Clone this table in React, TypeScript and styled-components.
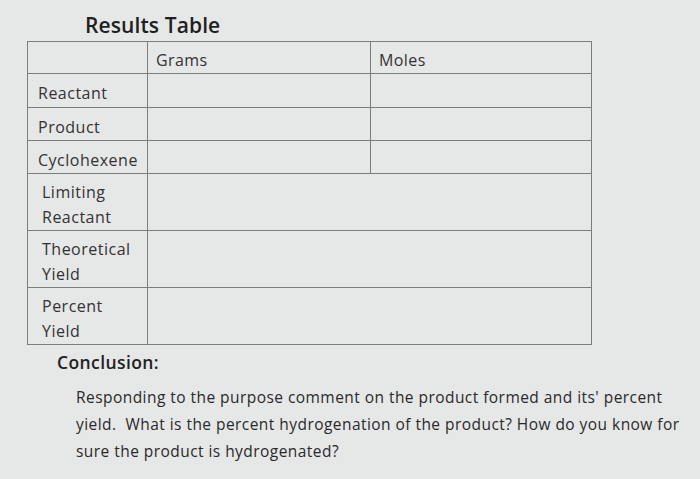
import React from 'react'
import styled, { createGlobalStyle } from 'styled-components'

const GlobalStyle = createGlobalStyle`
  html, body {
    margin: 0;
    padding: 0;
    background: #e6e7e7;
  }
  body {
    font-family: "Open Sans", "DejaVu Sans", sans-serif;
    color: #2b2b2b;
  }
`

interface Row {
  label: string[]
  split: boolean
}

const rows: Row[] = [
  { label: ['Reactant'], split: true },
  { label: ['Product'], split: true },
  { label: ['Cyclohexene'], split: true },
  { label: ['Limiting', 'Reactant'], split: false },
  { label: ['Theoretical', 'Yield'], split: false },
  { label: ['Percent', 'Yield'], split: false },
]

const App = () => {
  return (
    <Page>
      <GlobalStyle />
      <Title>Results Table</Title>
      <Table>
        <colgroup>
          <col style={{ width: 120 }} />
          <col style={{ width: 223 }} />
          <col style={{ width: 221 }} />
        </colgroup>
        <tbody>
          <tr>
            <Cell />
            <HeadCell>Grams</HeadCell>
            <HeadCell>Moles</HeadCell>
          </tr>
          {rows.map((r, idx) => (
            <tr key={r.label.join(' ')}>
              <Label tall={!r.split} first={idx === 0}>
                {r.label.map((l, i) => (
                  <LabelLine key={i}>{l}</LabelLine>
                ))}
              </Label>
              {r.split ? (
                <>
                  <Cell />
                  <Cell />
                </>
              ) : (
                <Cell colSpan={2} />
              )}
            </tr>
          ))}
        </tbody>
      </Table>
      <Conclusion>Conclusion:</Conclusion>
      <Prompt>
        <PromptLine>Responding to the purpose comment on the product formed and its' percent</PromptLine>
        <PromptLine>yield.&nbsp; What is the percent hydrogenation of the product? How do you know for</PromptLine>
        <PromptLine>sure the product is hydrogenated?</PromptLine>
      </Prompt>
    </Page>
  )
}

const Page = styled.div`
  width: 700px;
  height: 479px;
  box-sizing: border-box;
  padding: 12px 0 0 27px;
  overflow: hidden;
`
const Title = styled.h1`
  margin: 0 0 3px 58px;
  font-size: 21px;
  line-height: 26px;
  font-weight: 600;
  letter-spacing: 0.1px;
  color: #1f1f1f;
`
const Table = styled.table`
  border-collapse: collapse;
  table-layout: fixed;
  width: 564px;
`
const Cell = styled.td`
  border: 1px solid #7b7c7c;
  height: 32px;
  padding: 0;
  box-sizing: border-box;
`
const HeadCell = styled(Cell)`
  font-size: 16px;
  line-height: 20px;
  letter-spacing: 0.4px;
  padding: 4px 0 0 8px;
  vertical-align: middle;
  color: #333;
`
const Label = styled.td<{ tall: boolean; first: boolean }>`
  border: 1px solid #7b7c7c;
  height: ${(p) => (p.tall ? '57px' : p.first ? '34px' : '33px')};
  padding: ${(p) => (p.tall ? '5px' : '6px')} 4px 0 ${(p) => (p.tall ? '14px' : '10px')};
  box-sizing: border-box;
  font-size: 16px;
  line-height: 25px;
  letter-spacing: 0.5px;
  color: #333;
  vertical-align: middle;
`
const LabelLine = styled.div`
  white-space: nowrap;
`
const Conclusion = styled.h2`
  margin: 6px 0 0 30px;
  font-size: 17.5px;
  line-height: 22px;
  font-weight: 600;
  letter-spacing: 0.4px;
  color: #222;
`
const Prompt = styled.div`
  margin: 11px 0 0 49px;
  font-size: 15.5px;
  line-height: 27px;
  letter-spacing: 0.45px;
  color: #2a2a2a;
`
const PromptLine = styled.div`
  white-space: nowrap;
`

export default App
